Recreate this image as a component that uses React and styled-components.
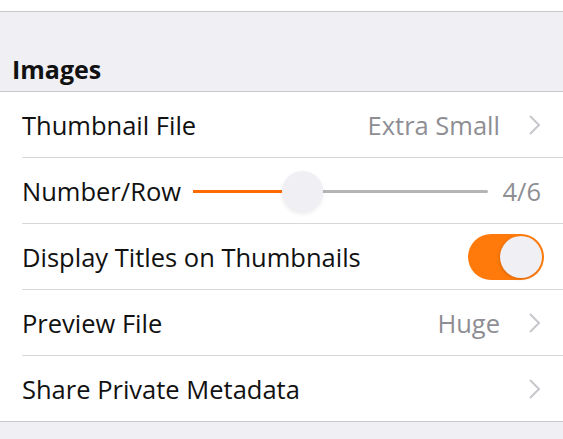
import React from "react";
import styled, { createGlobalStyle } from "styled-components";

const Global = createGlobalStyle`
  html, body { margin: 0; padding: 0; background: #ffffff; }
  body { font-family: "Open Sans", "Noto Sans", sans-serif; -webkit-font-smoothing: antialiased; }
`;

const Page = styled.div`
  width: 563px;
  height: 439px;
  overflow: hidden;
  background: #efeff4;
  display: flex;
  flex-direction: column;
`;

const TopStrip = styled.div`
  height: 11px;
  background: #ffffff;
  border-bottom: 1px solid #c8c7cc;
`;

const SectionHeader = styled.div`
  height: 80px;
  display: flex;
  align-items: flex-end;
  padding: 0 0 5px 12px;
  box-sizing: border-box;
  font-size: 25px;
  font-weight: 700;
  color: #111;
  border-bottom: 1px solid #c8c7cc;
`;

const Group = styled.div`
  background: #ffffff;
  border-bottom: 1px solid #c8c7cc;
`;

const Row = styled.div`
  box-sizing: border-box;
  margin-left: 22px;
  padding-right: 22px;
  display: flex;
  align-items: center;
  gap: 12px;
  border-bottom: ${(p) => (p.last ? "none" : "1px solid #d8d8dc")};
  height: ${(p) => (p.last ? "65px" : "66px")};
`;

const Label = styled.span`
  font-size: 25.5px;
  color: #111;
  white-space: nowrap;
  flex: ${(p) => (p.grow ? 1 : "none")};
`;

const Value = styled.span`
  font-size: 25.5px;
  color: #8e8e93;
  white-space: nowrap;
  margin-right: 16px;
`;

const Chevron = () => (
  <svg width="13" height="22" viewBox="0 0 13 22" style={{ flex: "none" }}>
    <path d="M2 2 L11 11 L2 20" fill="none" stroke="#c7c7cc" strokeWidth="2" />
  </svg>
);

const SliderWrap = styled.div`
  flex: 1;
  position: relative;
  height: 44px;
  margin-right: 2px;
`;

const Track = styled.div`
  position: absolute;
  left: 0;
  right: 0;
  top: 21px;
  height: 3px;
  background: #b5b5b5;
  border-radius: 2px;
`;

const Fill = styled.div`
  position: absolute;
  left: 0;
  top: 21px;
  height: 3px;
  background: #ff6a00;
`;

const Thumb = styled.div`
  position: absolute;
  top: 2px;
  width: 41px;
  height: 41px;
  border-radius: 50%;
  background: #efeff4;
  box-shadow: 0 2px 4px rgba(0, 0, 0, 0.08);
`;

const SliderValue = styled.span`
  font-size: 25.5px;
  color: #8e8e93;
`;

const Switch = styled.div`
  width: 76px;
  height: 46px;
  border-radius: 23px;
  background: #ff7a0a;
  position: relative;
  flex: none;
  margin-right: -3px;
`;

const Knob = styled.div`
  position: absolute;
  right: 2px;
  top: 2px;
  width: 42px;
  height: 42px;
  border-radius: 50%;
  background: #efeff4;
  box-shadow: -1px 1px 3px rgba(0, 0, 0, 0.15);
`;

export default function App() {
  const sliderPct = 0.3;
  return (
    <>
      <Global />
      <Page>
        <TopStrip />
        <SectionHeader>Images</SectionHeader>
        <Group>
          <Row>
            <Label grow>Thumbnail File</Label>
            <Value>Extra Small</Value>
            <Chevron />
          </Row>
          <Row>
            <Label>Number/Row</Label>
            <SliderWrap>
              <Track />
              <Fill style={{ width: `${sliderPct * 100}%` }} />
              <Thumb style={{ left: `calc(${sliderPct * 100}% - 0px)` }} />
            </SliderWrap>
            <SliderValue>4/6</SliderValue>
          </Row>
          <Row>
            <Label grow>Display Titles on Thumbnails</Label>
            <Switch>
              <Knob />
            </Switch>
          </Row>
          <Row>
            <Label grow>Preview File</Label>
            <Value>Huge</Value>
            <Chevron />
          </Row>
          <Row last>
            <Label grow>Share Private Metadata</Label>
            <Chevron />
          </Row>
        </Group>
      </Page>
    </>
  );
}
